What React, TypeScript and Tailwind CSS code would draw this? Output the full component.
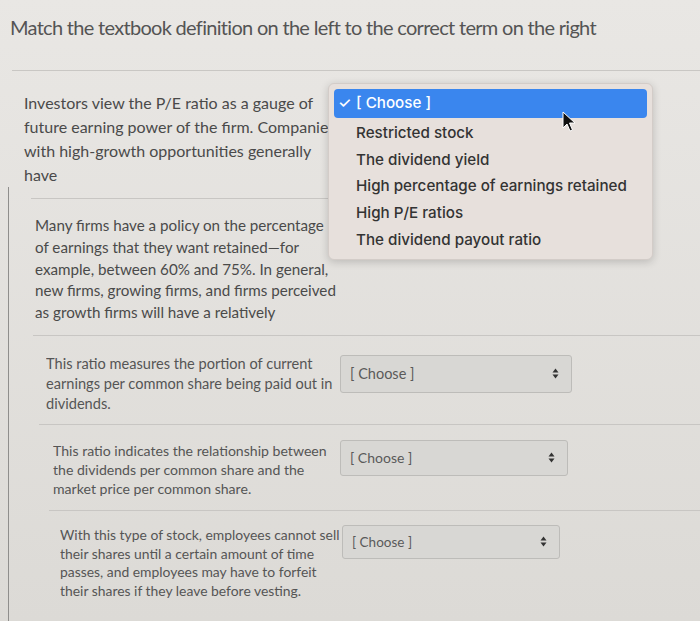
import React from 'react';

const options = [
  'Restricted stock',
  'The dividend yield',
  'High percentage of earnings retained',
  'High P/E ratios',
  'The dividend payout ratio',
];

function Lines({ lines }: { lines: string[] }) {
  return (
    <>
      {lines.map((l) => (
        <span key={l} className="block whitespace-nowrap">
          {l}
        </span>
      ))}
    </>
  );
}

function SelectBox({ className }: { className: string }) {
  return (
    <div
      className={`flex shrink-0 items-center justify-between rounded-[3px] border border-[#bdbcb9] bg-[#d8d7d4] pl-[9px] pr-2 text-[#5a5a5a] ${className}`}
    >
      <span>[ Choose ]</span>
      <svg width="7" height="11" viewBox="0 0 7 11" className="mr-1">
        <path d="M3.5 0.5 L6.5 4.5 L0.5 4.5 Z" fill="#333" />
        <path d="M3.5 10.5 L6.5 6.5 L0.5 6.5 Z" fill="#333" />
      </svg>
    </div>
  );
}

export default function App() {
  return (
    <div
      className="relative h-[621px] w-[700px] overflow-hidden bg-gradient-to-b from-[#e9e7e4] to-[#dcdad6] text-[#4d4d4d]"
      style={{ fontFamily: 'Lato, "Open Sans", sans-serif' }}
    >
      <h1 className="whitespace-nowrap pl-[10px] pt-[14px] text-[20px] leading-[26px] tracking-[-0.7px] text-[#545454]">
        Match the textbook definition on the left to the correct term on the right
      </h1>
      <div className="ml-[12px] mt-[30px] border-t border-[#c9c7c4]" />

      {/* row 1 */}
      <div className="flex pl-[24px] pt-[20px]">
        <p className="text-[16px] leading-[24px] text-[#4a4a4a]">
          <Lines
            lines={[
              'Investors view the P/E ratio as a gauge of',
              'future earning power of the firm. Companies',
              'with high-growth opportunities generally',
              'have',
            ]}
          />
        </p>
      </div>

      <div className="ml-[8px] border-l border-[#8f8e8c] pt-[11px]">
        <div className="ml-[22px] mr-[370px] border-t border-[#c8c6c3]" />

        {/* row 2 */}
        <div className="flex pl-[26px] pt-[16px]">
          <p className="text-[15.2px] leading-[21.8px] text-[#4a4a4a]">
            <Lines
              lines={[
                'Many firms have a policy on the percentage',
                'of earnings that they want retained—for',
                'example, between 60% and 75%. In general,',
                'new firms, growing firms, and firms perceived',
                'as growth firms will have a relatively',
              ]}
            />
          </p>
        </div>
        <div className="ml-[24px] mt-[11px] border-t border-[#c8c6c3]" />

        {/* row 3 */}
        <div className="flex items-start pl-[37px] pt-[18px]">
          <p className="w-[294px] overflow-hidden text-[14.6px] leading-[20px] text-[#555]">
            <Lines
              lines={[
                'This ratio measures the portion of current',
                'earnings per common share being paid out in',
                'dividends.',
              ]}
            />
          </p>
          <SelectBox className="mt-[1px] h-[38px] w-[232px] text-[14.5px]" />
        </div>
        <div className="ml-[30px] mt-[10px] border-t border-[#c8c6c3]" />

        {/* row 4 */}
        <div className="flex items-start pl-[44px] pt-[16px]">
          <p className="w-[287px] overflow-hidden text-[14.1px] leading-[19px] text-[#555]">
            <Lines
              lines={[
                'This ratio indicates the relationship between',
                'the dividends per common share and the',
                'market price per common share.',
              ]}
            />
          </p>
          <SelectBox className="mt-[-1px] h-[36px] w-[228px] text-[14px]" />
        </div>
        <div className="ml-[40px] mt-[12px] border-t border-[#c8c6c3]" />

        {/* row 5 */}
        <div className="flex items-start pl-[51px] pt-[15px]">
          <p className="w-[282px] overflow-hidden text-[13.9px] leading-[18.6px] text-[#555]">
            <Lines
              lines={[
                'With this type of stock, employees cannot sell',
                'their shares until a certain amount of time',
                'passes, and employees may have to forfeit',
                'their shares if they leave before vesting.',
              ]}
            />
          </p>
          <SelectBox className="mt-[-1px] h-[34px] w-[218px] text-[13.5px]" />
        </div>
        <div className="h-[40px]" />
      </div>

      {/* open dropdown menu */}
      <div
        className="absolute left-[328px] top-[83px] w-[325px] rounded-[6px] border border-[#d3ccc8] bg-[#e7e0dc] px-[5px] pb-[5px] pt-[5px] text-[15.2px] text-[#333] shadow-[0_2px_8px_rgba(0,0,0,0.18)]"
        style={{ fontFamily: 'Inter, "Liberation Sans", sans-serif' }}
      >
        <div className="flex h-[29px] items-center rounded-[4px] bg-[#3a86ee] pl-[4px] font-medium text-white">
          <span className="w-[18px] text-[15px]">✓</span>
          <span>[ Choose ]</span>
        </div>
        <div className="mt-[2px]">
          {options.map((o) => (
            <div key={o} className="flex h-[26.75px] items-center pl-[22px] font-medium">
              {o}
            </div>
          ))}
        </div>
      </div>

      {/* mouse pointer */}
      <svg
        className="absolute left-[562px] top-[111px]"
        width="14"
        height="22"
        viewBox="0 0 14 22"
      >
        <path
          d="M1 1 L1 17 L5 13 L8 20 L10.5 19 L7.5 12 L13 12 Z"
          fill="#111"
          stroke="#fff"
          strokeWidth="1"
        />
      </svg>
    </div>
  );
}
